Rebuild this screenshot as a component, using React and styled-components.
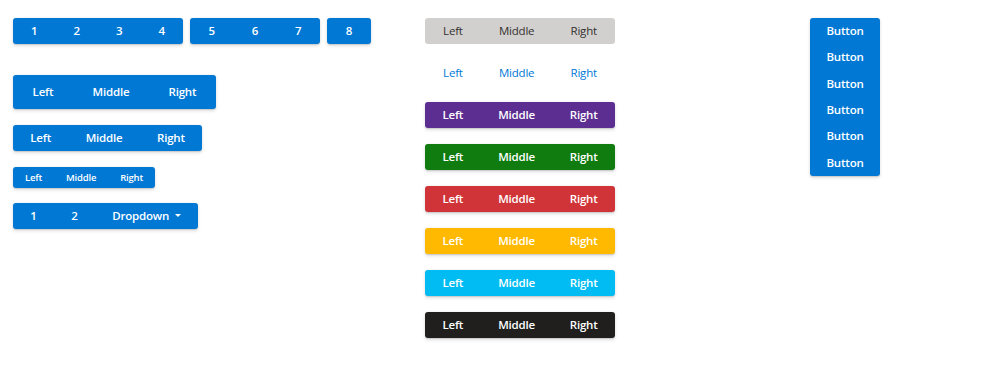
import styled, { createGlobalStyle } from "styled-components";

const GlobalStyle = createGlobalStyle`
  body {
    margin: 0;
    background: #ffffff;
    font-family: "Open Sans", "Noto Sans", "Liberation Sans", sans-serif;
  }
`;

const COLORS = {
  primary: { bg: "#0078d4", fg: "#ffffff" },
  secondary: { bg: "#d2d0ce", fg: "#323130" },
  flat: { bg: "transparent", fg: "#0078d4" },
  purple: { bg: "#5c2e91", fg: "#ffffff" },
  success: { bg: "#107c10", fg: "#ffffff" },
  danger: { bg: "#d13438", fg: "#ffffff" },
  warning: { bg: "#ffb900", fg: "#ffffff" },
  info: { bg: "#00bcf2", fg: "#ffffff" },
  dark: { bg: "#201f1e", fg: "#ffffff" },
};

const SIZES = {
  small: { h: 21, font: 9.5, pad: 12 },
  normal: { h: 26, font: 11.5, pad: 17.3 },
  large: { h: 34, font: 11.5, pad: 19.6 },
  vertical: { h: 26.33, font: 11.5, pad: 17.5 },
};

const isPlain = (v) => v === "flat" || v === "secondary";

const Page = styled.div`
  display: grid;
  grid-template-columns: 412px 385px auto;
  padding: 18px 13px;
  align-items: start;
`;

const Column = styled.div`
  display: flex;
  flex-direction: column;
  align-items: flex-start;
`;

const Row = styled.div`
  display: flex;
  gap: 7px;
  margin-bottom: ${(p) => p.$mb || 0}px;
`;

const Group = styled.div`
  display: inline-flex;
  flex-direction: ${(p) => (p.$vertical ? "column" : "row")};
  border-radius: 3px;
  overflow: hidden;
  background: ${(p) => COLORS[p.$variant].bg};
  box-shadow: ${(p) =>
    isPlain(p.$variant)
      ? "none"
      : "0 1.6px 3.6px rgba(0,0,0,0.13), 0 0.3px 0.9px rgba(0,0,0,0.11)"};
  margin-bottom: ${(p) => p.$mb || 0}px;
  width: ${(p) => (p.$width ? `${p.$width}px` : "auto")};
`;

const Btn = styled.button`
  font-family: inherit;
  border: none;
  background: transparent;
  color: ${(p) => COLORS[p.$variant].fg};
  font-weight: ${(p) => (isPlain(p.$variant) ? 400 : 600)};
  font-size: ${(p) => SIZES[p.$size].font}px;
  letter-spacing: -0.2px;
  height: ${(p) => SIZES[p.$size].h}px;
  padding: 0 ${(p) => SIZES[p.$size].pad}px 1px;
  min-width: ${(p) => p.$min || 0}px;
  flex: ${(p) => (p.$grow ? "1 1 auto" : "0 0 auto")};
  display: flex;
  align-items: center;
  justify-content: center;
  gap: 4px;
  white-space: nowrap;
  cursor: pointer;
  & + & {
    border-left: ${(p) =>
      p.$variant === "flat" || p.$size === "vertical"
        ? "none"
        : "1px solid rgba(0,0,0,0.08)"};
  }
`;

const Caret = styled.span`
  width: 0;
  height: 0;
  margin-left: 2px;
  border-left: 3.5px solid transparent;
  border-right: 3.5px solid transparent;
  border-top: 3.5px solid currentColor;
`;

const ButtonGroup = ({ items, variant = "primary", size = "normal", mb, min, width }) => (
  <Group $variant={variant} $mb={mb} $vertical={size === "vertical"} $width={width}>
    {items.map((label, i) => (
      <Btn key={i} $variant={variant} $size={size} $min={min} $grow={!!width}>
        {label}
      </Btn>
    ))}
  </Group>
);

const LMR = ["Left", "Middle", "Right"];
const themed = ["purple", "success", "danger", "warning", "info", "dark"];

export default function App() {
  return (
    <>
      <GlobalStyle />
      <Page>
        <Column>
          <Row $mb={31}>
            <ButtonGroup items={["1", "2", "3", "4"]} min={42.5} />
            <ButtonGroup items={["5", "6", "7"]} min={43.3} />
            <ButtonGroup items={["8"]} min={44} />
          </Row>
          <ButtonGroup items={LMR} size="large" mb={16} />
          <ButtonGroup items={LMR} mb={16} />
          <ButtonGroup items={LMR} size="small" mb={15} />
          <ButtonGroup
            items={[
              "1",
              "2",
              <>
                Dropdown <Caret />
              </>,
            ]}
            min={41}
          />
        </Column>
        <Column>
          <ButtonGroup items={LMR} variant="secondary" mb={16} width={190} />
          <ButtonGroup items={LMR} variant="flat" mb={16} width={190} />
          {themed.map((v) => (
            <ButtonGroup key={v} items={LMR} variant={v} mb={16} width={190} />
          ))}
        </Column>
        <Column>
          <ButtonGroup items={Array(6).fill("Button")} size="vertical" width={70} />
        </Column>
      </Page>
    </>
  );
}
